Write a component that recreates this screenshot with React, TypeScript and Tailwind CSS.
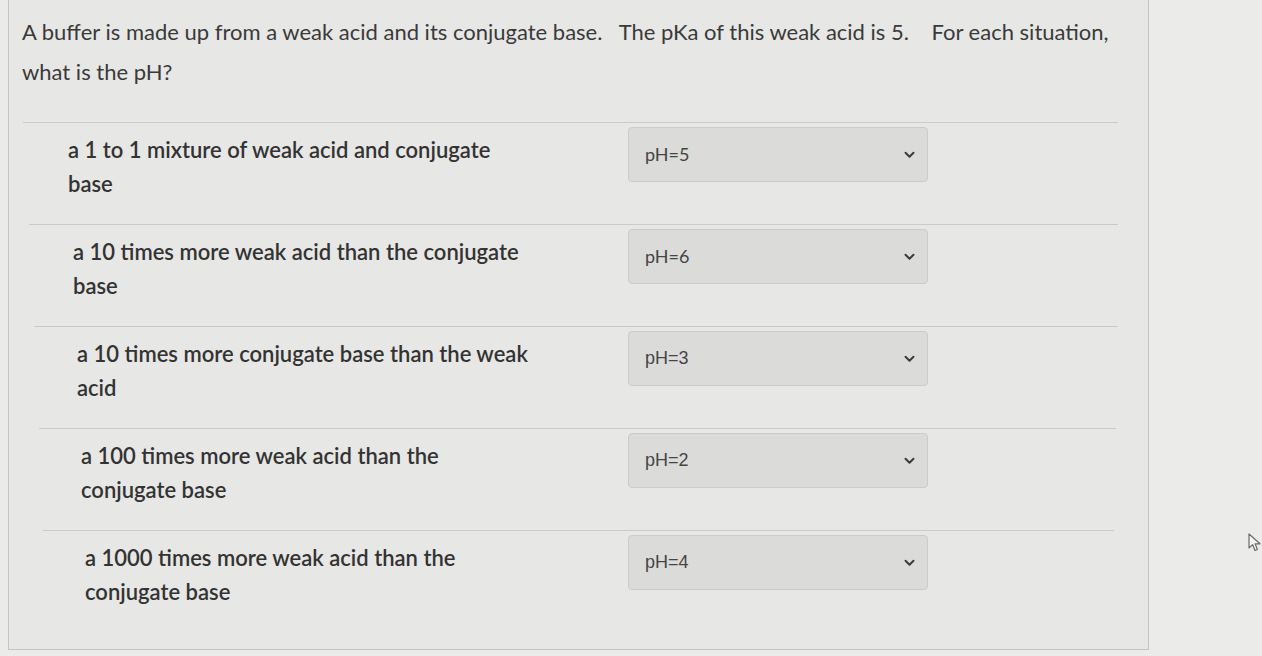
import React from 'react';

interface Row {
  label: string[];
  value: string;
  line: string;
  pad: string;
  font: string;
}

const rows: Row[] = [
  {
    label: ['a 1 to 1 mixture of weak acid and conjugate', 'base'],
    value: 'pH=5',
    line: 'ml-[14px] mr-[30px]',
    pad: 'pl-[59px]',
    font: "font-['Lato',sans-serif]",
  },
  {
    label: ['a 10 times more weak acid than the conjugate', 'base'],
    value: 'pH=6',
    line: 'ml-[20px] mr-[30px]',
    pad: 'pl-[64px]',
    font: "font-['Lato',sans-serif]",
  },
  {
    label: ['a 10 times more conjugate base than the weak', 'acid'],
    value: 'pH=3',
    line: 'ml-[25px] mr-[30px]',
    pad: 'pl-[68px]',
    font: "font-['Liberation_Sans',Arial,sans-serif]",
  },
  {
    label: ['a 100 times more weak acid than the', 'conjugate base'],
    value: 'pH=2',
    line: 'ml-[30px] mr-[32px]',
    pad: 'pl-[72px]',
    font: "font-['Liberation_Sans',Arial,sans-serif]",
  },
  {
    label: ['a 1000 times more weak acid than the', 'conjugate base'],
    value: 'pH=4',
    line: 'ml-[34px] mr-[34px]',
    pad: 'pl-[76px]',
    font: "font-['Liberation_Sans',Arial,sans-serif]",
  },
];

const Chevron = () => (
  <svg width="11" height="8" viewBox="0 0 11 8" fill="none">
    <path d="M1.5 1.8 L5.5 5.8 L9.5 1.8" stroke="#3c3c3c" strokeWidth="2" strokeLinecap="round" strokeLinejoin="round" />
  </svg>
);

const Cursor = () => (
  <svg width="14" height="20" viewBox="0 0 14 20" fill="none">
    <path
      d="M1 1 L1 15 L4.6 11.6 L7 17.5 L9.4 16.5 L7.1 10.8 L12 10.8 Z"
      fill="#f4f4f2"
      stroke="#6a6a68"
      strokeWidth="1.2"
      strokeLinejoin="round"
    />
  </svg>
);

export default function App() {
  return (
    <div className="relative w-[1262px] h-[656px] overflow-hidden bg-[#ebebe9] font-['Lato',sans-serif] text-[#363636]">
      <div className="ml-[8px] w-[1141px] h-[650px] border-l border-r border-b border-[#c4c4c2] bg-[#e7e7e5]">
        <p className="pl-[13px] pt-[12px] text-[22px] leading-[40px] text-[#3a3a3a] whitespace-nowrap">
          A buffer is made up from a weak acid and its conjugate base.&nbsp;&nbsp; The pKa of this weak acid is 5.&nbsp;&nbsp;&nbsp; For each situation,
          <br />
          what is the pH?
        </p>

        <div className="mt-[30px]">
          {rows.map((row) => (
            <div key={row.value} className="h-[102px]">
              <div className={`h-px bg-[#cbcbc9] ${row.line}`} />
              <div className="flex">
                <div className={`w-[619px] flex-none pt-[10px] text-[22px] leading-[34px] font-semibold text-[#333] whitespace-nowrap ${row.pad}`}>
                  {row.label.map((l) => (
                    <div key={l}>{l}</div>
                  ))}
                </div>
                <div className="mt-[4px] w-[300px] h-[55px] rounded-[4px] border border-[#cbcbc9] bg-[#dbdbda] flex items-center justify-between pl-[16px] pr-[12px]">
                  <span className={`text-[18px] text-[#454545] ${row.font}`}>{row.value}</span>
                  <Chevron />
                </div>
              </div>
            </div>
          ))}
        </div>
      </div>

      <div className="absolute left-[1248px] top-[533px]">
        <Cursor />
      </div>
    </div>
  );
}
